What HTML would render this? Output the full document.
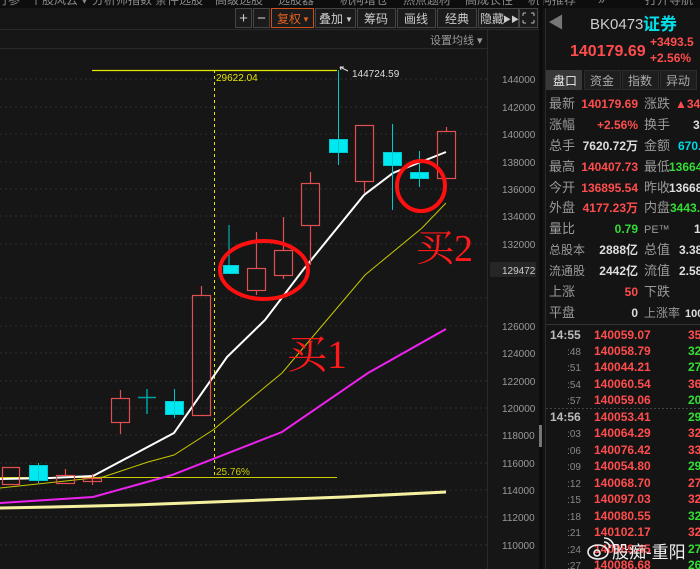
<!DOCTYPE html>
<html><head><meta charset="utf-8"><style>
body{margin:0;width:700px;height:569px;overflow:hidden;background:#161616;font-family:"Liberation Sans","Noto Sans CJK SC",sans-serif;}
svg{position:absolute;left:0;top:0}
text{font-family:"Liberation Sans","Noto Sans CJK SC",sans-serif}
text.serif{font-family:"Liberation Serif","Noto Serif CJK SC",serif}
</style></head><body>
<svg width="700" height="569" viewBox="0 0 700 569" xmlns="http://www.w3.org/2000/svg">
<rect width="700" height="569" fill="#161616"/>
<rect x="0" y="0" width="700" height="8" fill="#0d0d0d"/>
<g fill="#8a8a8a" font-size="12">
<text x="-4" y="4">行参</text><text x="30" y="4">个股风云 ▾</text><text x="92" y="4">分析师指数</text><text x="155" y="4">条件选股</text><text x="215" y="4">高级选股</text><text x="278" y="4">选股器</text><text x="340" y="4">机构增仓</text><text x="403" y="4">热点题材</text><text x="465" y="4">高成长性</text><text x="528" y="4">机构推荐</text><text x="598" y="4">»</text><text x="645" y="4">打开导航</text>
</g>
<line x1="0" y1="29.5" x2="540" y2="29.5" stroke="#2a2a2a"/>
<line x1="0" y1="48.5" x2="487" y2="48.5" stroke="#2a2a2a"/>
<g font-size="12" fill="#ccc" text-anchor="middle">
<rect x="235.5" y="8.5" width="16" height="19" fill="#1b1b1b" stroke="#444"/><text x="243.5" y="23" font-size="15">+</text>
<rect x="253.5" y="8.5" width="16" height="19" fill="#1b1b1b" stroke="#444"/><text x="261.5" y="23" font-size="15">−</text>
<rect x="271.5" y="8.5" width="42" height="19" fill="#1b1b1b" stroke="#d0501a"/><text x="289" y="23" fill="#e0601e">复权</text><text x="306" y="22" fill="#e0601e" font-size="8">▼</text>
<rect x="315.5" y="8.5" width="40" height="19" fill="#1b1b1b" stroke="#444"/><text x="331" y="23">叠加</text><text x="349" y="22" font-size="8">▼</text>
<rect x="357.5" y="8.5" width="38" height="19" fill="#1b1b1b" stroke="#444"/><text x="376" y="23">筹码</text>
<rect x="397.5" y="8.5" width="38" height="19" fill="#1b1b1b" stroke="#444"/><text x="416" y="23">画线</text>
<rect x="437.5" y="8.5" width="39" height="19" fill="#1b1b1b" stroke="#444"/><text x="457" y="23">经典</text>
<rect x="478.5" y="8.5" width="40" height="19" fill="#1b1b1b" stroke="#444"/><text x="492" y="23">隐藏</text><text x="511" y="22" font-size="8">▶▶</text>
<rect x="519.5" y="8.5" width="18" height="19" fill="#1b1b1b" stroke="#444"/>
</g>
<path d="M523 13h3M523 13v3M534 13h-3M534 13v3M523 23h3M523 23v-3M534 23h-3M534 23v-3" stroke="#bbb" fill="none"/>
<text x="430" y="44" font-size="11" fill="#999">设置均线 ▾</text>
<g stroke="#2e2e2e" stroke-dasharray="2,3">
<line x1="0" y1="79" x2="487" y2="79"/><line x1="0" y1="107" x2="487" y2="107"/><line x1="0" y1="134" x2="487" y2="134"/><line x1="0" y1="162" x2="487" y2="162"/><line x1="0" y1="189" x2="487" y2="189"/><line x1="0" y1="216" x2="487" y2="216"/><line x1="0" y1="244" x2="487" y2="244"/><line x1="0" y1="298" x2="487" y2="298"/><line x1="0" y1="326" x2="487" y2="326"/><line x1="0" y1="353" x2="487" y2="353"/><line x1="0" y1="381" x2="487" y2="381"/><line x1="0" y1="408" x2="487" y2="408"/><line x1="0" y1="435" x2="487" y2="435"/><line x1="0" y1="463" x2="487" y2="463"/><line x1="0" y1="490" x2="487" y2="490"/><line x1="0" y1="517" x2="487" y2="517"/><line x1="0" y1="545" x2="487" y2="545"/>
</g>
<line x1="487.5" y1="30" x2="487.5" y2="569" stroke="#2a2a2a"/>
<g font-size="10" fill="#999">
<text x="502" y="83">144000</text><text x="502" y="111">142000</text><text x="502" y="138">140000</text><text x="502" y="166">138000</text><text x="502" y="193">136000</text><text x="502" y="220">134000</text><text x="502" y="248">132000</text><text x="502" y="330">126000</text><text x="502" y="357">124000</text><text x="502" y="385">122000</text><text x="502" y="412">120000</text><text x="502" y="439">118000</text><text x="502" y="467">116000</text><text x="502" y="494">114000</text><text x="502" y="521">112000</text><text x="502" y="549">110000</text>
</g>
<rect x="490" y="262" width="46" height="15" fill="#262626"/>
<text x="502" y="274" font-size="10" fill="#ccc">129472</text>
<rect x="539" y="0" width="4" height="569" fill="#0c0c0c"/>
<rect x="539" y="425" width="3" height="22" fill="#777"/>
<line x1="92" y1="70.5" x2="337" y2="70.5" stroke="#e6e600" stroke-width="1.3"/>
<line x1="214.5" y1="70" x2="214.5" y2="478" stroke="#e6e600" stroke-dasharray="3,3"/>
<line x1="0" y1="477.5" x2="337" y2="477.5" stroke="#cccc00"/>
<text x="216" y="81" font-size="10" fill="#e6e600">29622.04</text>
<text x="216" y="475" font-size="10" fill="#cccc00">25.76%</text>
<path d="M340 67l8 4M340 67l4 0M340 67l1 3" stroke="#ddd" fill="none"/>
<text x="352" y="77" font-size="10" fill="#ddd">144724.59</text>
<polyline points="0,508 52,507 134,505 213,502 344,497 446,492" fill="none" stroke="#f5f0a0" stroke-width="3"/>
<polyline points="0,503 93,497 172,475 282,432 368,373 446,329" fill="none" stroke="#ee22ee" stroke-width="2"/>
<polyline points="0,488 103,477 148,462 174,455 213,430 282,373 365,275 422,228 446,203" fill="none" stroke="#c8c800" stroke-width="1"/>
<polyline points="0,479 50,478 93,476 174,433 227,357 265,320 303,270 364,195 393,173 446,152" fill="none" stroke="#fff" stroke-width="2"/>
<g fill="none" stroke="#e05050" stroke-width="1.2">
<rect x="2.5" y="467.5" width="17" height="17"/>
<rect x="56.5" y="475.5" width="18" height="8"/><line x1="65.5" y1="469" x2="65.5" y2="475"/>
<rect x="83.5" y="478.5" width="18" height="3"/><line x1="92.5" y1="474" x2="92.5" y2="485"/>
<rect x="111.5" y="398.5" width="18" height="24"/><line x1="120.5" y1="390" x2="120.5" y2="398"/><line x1="120.5" y1="422" x2="120.5" y2="434"/>
<rect x="192.5" y="295.5" width="18" height="120"/><line x1="201.5" y1="286" x2="201.5" y2="295"/>
<rect x="247.5" y="268.5" width="18" height="22"/><line x1="256.5" y1="232" x2="256.5" y2="268"/><line x1="256.5" y1="290" x2="256.5" y2="295"/>
<rect x="274.5" y="250.5" width="18" height="25"/><line x1="283.5" y1="217" x2="283.5" y2="250"/><line x1="283.5" y1="275" x2="283.5" y2="279"/>
<rect x="301.5" y="183.5" width="18" height="42"/><line x1="310.5" y1="172" x2="310.5" y2="183"/><line x1="310.5" y1="225" x2="310.5" y2="265"/>
<rect x="355.5" y="125.5" width="18" height="56"/><line x1="364.5" y1="181" x2="364.5" y2="193"/>
<rect x="437.5" y="131.5" width="18" height="47"/><line x1="446.5" y1="127" x2="446.5" y2="131"/>
</g>
<g fill="#00e8f0" stroke="#00c8d0">
<rect x="29.5" y="465.5" width="18" height="15"/><line x1="38.5" y1="463" x2="38.5" y2="483"/>
<line x1="138" y1="397.5" x2="156" y2="397.5" stroke="#00a0a0" stroke-width="1.5"/><line x1="147" y1="389" x2="147" y2="414" stroke="#00a0a0" stroke-width="1.5"/>
<rect x="165.5" y="401.5" width="18" height="13"/><line x1="174.5" y1="389" x2="174.5" y2="418"/>
<rect x="223.5" y="265.5" width="15" height="8"/><line x1="229" y1="225" x2="229" y2="265"/>
<rect x="329.5" y="139.5" width="18" height="13"/><line x1="338.5" y1="70" x2="338.5" y2="165"/>
<rect x="383.5" y="152.5" width="18" height="13"/><line x1="392.5" y1="124" x2="392.5" y2="210"/>
<rect x="410.5" y="172.5" width="18" height="6"/><line x1="419.5" y1="151" x2="419.5" y2="187"/>
</g>
<ellipse cx="264" cy="270" rx="44" ry="29" fill="none" stroke="#ff1010" stroke-width="4"/>
<ellipse cx="421" cy="186" rx="24" ry="25" fill="none" stroke="#ff1010" stroke-width="4"/>
<text class="serif" x="287" y="368" font-size="40" fill="#ff1a1a">买1</text>
<text class="serif" x="416" y="261" font-size="38" fill="#ff1a1a">买2</text>
<rect x="543" y="8" width="157" height="561" fill="#141414"/>
<line x1="545.5" y1="8" x2="545.5" y2="569" stroke="#2a2a2a"/>
<text x="548" y="28" font-size="16" fill="#777">◀</text>
<text x="590" y="29" font-size="15" fill="#ccc">BK0473</text>
<text x="643" y="30" font-size="17" fill="#00e0e8" font-weight="bold">证券</text>
<text x="570" y="56" font-size="16" fill="#ff4d4d" font-weight="bold">140179.69</text>
<text x="650" y="46" font-size="12" fill="#ff4d4d" font-weight="bold">+3493.5</text>
<text x="650" y="62" font-size="12" fill="#ff4d4d" font-weight="bold">+2.56%</text>
<g font-size="12" fill="#aaa">
<rect x="546" y="70" width="36" height="20" fill="#383838"/><text x="553" y="85" fill="#eee">盘口</text>
<rect x="584.5" y="70.5" width="36" height="19" fill="#1e1e1e" stroke="#2c2c2c"/><text x="590" y="85">资金</text>
<rect x="622.5" y="70.5" width="36" height="19" fill="#1e1e1e" stroke="#2c2c2c"/><text x="628" y="85">指数</text>
<rect x="660.5" y="70.5" width="36" height="19" fill="#1e1e1e" stroke="#2c2c2c"/><text x="666" y="85">异动</text>
</g>
<g font-size="12" font-weight="bold">
<g fill="#999" font-weight="normal" font-size="13">
<text x="549" y="108">最新</text><text x="549" y="129">涨幅</text><text x="549" y="150">总手</text><text x="549" y="171">最高</text><text x="549" y="192">今开</text><text x="549" y="212">外盘</text><text x="549" y="233">量比</text><text x="549" y="254" font-size="12">总股本</text><text x="549" y="275" font-size="12">流通股</text><text x="549" y="296">上涨</text><text x="549" y="317">平盘</text>
<text x="644" y="108">涨跌</text><text x="644" y="129">换手</text><text x="644" y="150">金额</text><text x="644" y="171">最低</text><text x="644" y="192">昨收</text><text x="644" y="212">内盘</text><text x="644" y="233" font-size="11">PE™</text><text x="644" y="254">总值</text><text x="644" y="275">流值</text><text x="644" y="296">下跌</text><text x="644" y="317" font-size="12">上涨率</text>
</g>
<g text-anchor="end">
<text x="638" y="108" fill="#ff4d4d">140179.69</text><text x="638" y="129" fill="#ff4d4d">+2.56%</text><text x="638" y="150" fill="#ddd">7620.72万</text><text x="638" y="171" fill="#ff4d4d">140407.73</text><text x="638" y="192" fill="#ff4d4d">136895.54</text><text x="638" y="212" fill="#ff4d4d">4177.23万</text><text x="638" y="233" fill="#33dd33">0.79</text><text x="638" y="254" fill="#ddd">2888亿</text><text x="638" y="275" fill="#ddd">2442亿</text><text x="638" y="296" fill="#ff4d4d">50</text><text x="638" y="317" fill="#ddd">0</text>
</g>
<text x="675" y="108" fill="#ff4d4d">▲349</text><text x="693" y="129" fill="#ddd">3</text><text x="678" y="150" fill="#00d8e8">670.</text><text x="669" y="171" fill="#33dd33">13664</text><text x="669" y="192" fill="#ddd">13668</text><text x="670" y="212" fill="#33dd33">3443.</text><text x="694" y="233" fill="#ddd">1</text><text x="679" y="254" fill="#ddd">3.38</text><text x="679" y="275" fill="#ddd">2.58</text><text x="685" y="317" fill="#ddd" font-size="11">100</text>
</g>
<line x1="546" y1="324.5" x2="700" y2="324.5" stroke="#333"/>
<line x1="546" y1="408.5" x2="700" y2="408.5" stroke="#444" stroke-dasharray="2,2"/>
<g font-size="12" font-weight="bold">
<text x="550" y="339" fill="#bbb">14:55</text><text x="550" y="421" fill="#bbb">14:56</text>
<g fill="#888" font-weight="normal" font-size="10" text-anchor="end">
<text x="581" y="355">:48</text><text x="581" y="371">:51</text><text x="581" y="388">:54</text><text x="581" y="404">:57</text><text x="581" y="437">:03</text><text x="581" y="454">:06</text><text x="581" y="470">:09</text><text x="581" y="487">:12</text><text x="581" y="503">:15</text><text x="581" y="520">:18</text><text x="581" y="536">:21</text><text x="581" y="553">:24</text><text x="581" y="569">:27</text>
</g>
<g fill="#ff4d4d">
<text x="594" y="339">140059.07</text><text x="594" y="355">140058.79</text><text x="594" y="371">140044.21</text><text x="594" y="388">140060.54</text><text x="594" y="404">140059.06</text><text x="594" y="421">140053.41</text><text x="594" y="437">140064.29</text><text x="594" y="454">140076.42</text><text x="594" y="470">140054.80</text><text x="594" y="487">140068.70</text><text x="594" y="503">140097.03</text><text x="594" y="520">140080.55</text><text x="594" y="536">140102.17</text><text x="594" y="553">140089.45</text><text x="594" y="569">140086.68</text>
</g>
<text x="688" y="339" fill="#ff4d4d">35</text><text x="688" y="355" fill="#33dd33">32</text><text x="688" y="371" fill="#33dd33">27</text><text x="688" y="388" fill="#ff4d4d">36</text><text x="688" y="404" fill="#33dd33">20</text><text x="688" y="421" fill="#33dd33">29</text><text x="688" y="437" fill="#ff4d4d">32</text><text x="688" y="454" fill="#ff4d4d">33</text><text x="688" y="470" fill="#33dd33">29</text><text x="688" y="487" fill="#ff4d4d">27</text><text x="688" y="503" fill="#ff4d4d">32</text><text x="688" y="520" fill="#33dd33">32</text><text x="688" y="536" fill="#ff4d4d">32</text><text x="688" y="553" fill="#33dd33">27</text><text x="688" y="569" fill="#33dd33">26</text>
</g>
<g fill="none" stroke="#eee" stroke-width="1.6">
<ellipse cx="598" cy="552" rx="10" ry="7"/><circle cx="597" cy="553" r="3"/><path d="M604 542a6 6 0 0 1 6 6M604 538a10 10 0 0 1 10 10"/>
</g>
<text x="612" y="558" font-size="17" fill="#f2f2f2">股痴-重阳</text>
</svg>
</body></html>
